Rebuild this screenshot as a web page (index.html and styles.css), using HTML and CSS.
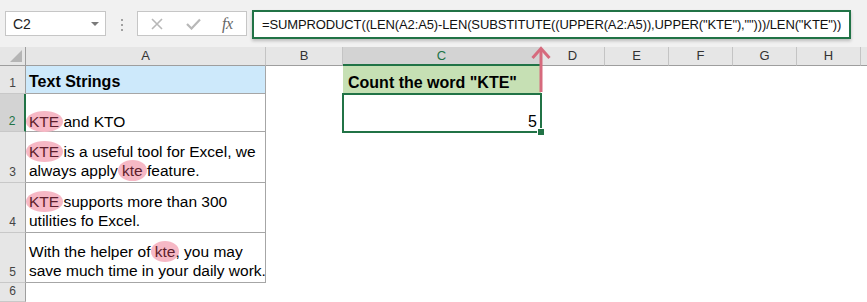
FILE: index.html
```html
<!DOCTYPE html>
<html>
<head>
<meta charset="utf-8">
<link rel="stylesheet" href="styles.css">
</head>
<body>
<div class="toolbar">
  <div class="namebox"><span>C2</span><span class="caret"></span></div>
  <div class="grip"><i></i><i></i><i></i></div>
  <div class="btns">
    <svg class="cross" width="12" height="12" viewBox="0 0 12 12"><path d="M1 1 L11 11 M11 1 L1 11" stroke="#b8b8b8" stroke-width="1.6" fill="none"/></svg>
    <svg class="check" width="15" height="12" viewBox="0 0 15 12"><path d="M1 6 L5.5 10.5 L14 1.5" stroke="#b8b8b8" stroke-width="2.2" fill="none"/></svg>
    <span class="fx">fx</span>
  </div>
  <div class="formula">=SUMPRODUCT((LEN(A2:A5)-LEN(SUBSTITUTE((UPPER(A2:A5)),UPPER("KTE"),"")))/LEN("KTE"))</div>
</div>
<div class="sheet">
  <div class="corner"><svg width="12" height="12" viewBox="0 0 12 12"><polygon points="12,0 12,12 0,12" fill="#b5b5b5"/></svg></div>
  <div class="ch">A</div>
  <div class="ch">B</div>
  <div class="ch sel">C</div>
  <div class="ch">D</div>
  <div class="ch">E</div>
  <div class="ch">F</div>
  <div class="ch">G</div>
  <div class="ch">H</div>
  <div class="ch last"></div>

  <div class="rh">1</div>
  <div class="a a1"><div>Text Strings</div></div>
  <div class="e"></div>
  <div class="c1"><div>Count the word "KTE"</div></div>
  <div class="e"></div><div class="e"></div><div class="e"></div><div class="e"></div><div class="e"></div><div class="e"></div>

  <div class="rh sel">2</div>
  <div class="a a2"><div><span class="hl first">KTE</span> and KTO</div></div>
  <div class="e"></div>
  <div class="c2"><div>5</div></div>
  <div class="e"></div><div class="e"></div><div class="e"></div><div class="e"></div><div class="e"></div><div class="e"></div>

  <div class="rh">3</div>
  <div class="a"><div><span class="hl first">KTE</span> is a useful tool for Excel, we<br>always apply <span class="hl">kte</span> feature.</div></div>
  <div class="e"></div><div class="e"></div>
  <div class="e"></div><div class="e"></div><div class="e"></div><div class="e"></div><div class="e"></div><div class="e"></div>

  <div class="rh">4</div>
  <div class="a"><div><span class="hl first">KTE</span> supports more than 300<br>utilities fo Excel.</div></div>
  <div class="e"></div><div class="e"></div>
  <div class="e"></div><div class="e"></div><div class="e"></div><div class="e"></div><div class="e"></div><div class="e"></div>

  <div class="rh">5</div>
  <div class="a"><div>With the helper of <span class="hl">kte</span>, you may<br>save much time in your daily work.</div></div>
  <div class="e"></div><div class="e"></div>
  <div class="e"></div><div class="e"></div><div class="e"></div><div class="e"></div><div class="e"></div><div class="e"></div>

  <div class="rh">6</div>
  <div class="e"></div><div class="e"></div><div class="e"></div>
  <div class="e"></div><div class="e"></div><div class="e"></div><div class="e"></div><div class="e"></div><div class="e"></div>

  <svg class="arrow" width="22" height="46" viewBox="0 0 22 46"><path d="M11 4 L11 46" stroke="#d66a7d" stroke-width="3" fill="none"/><path d="M2.5 12 L11 2.5 L19.5 12" stroke="#d66a7d" stroke-width="3" fill="none" stroke-linejoin="miter"/></svg>
</div>
</body>
</html>
```
FILE: styles.css
```css
html, body {
  margin: 0;
  padding: 0;
}
body {
  width: 867px;
  height: 302px;
  overflow: hidden;
  background: #ffffff;
  font-family: "Liberation Sans", Arial, sans-serif;
}
.toolbar {
  height: 47px;
  background: #f1f1f1;
  display: flex;
  align-items: flex-start;
  box-sizing: border-box;
}
.namebox {
  margin: 11px 0 0 5px;
  width: 101px;
  height: 25px;
  box-sizing: border-box;
  border: 1px solid #c6c6c6;
  background: #fff;
  display: flex;
  align-items: center;
  justify-content: space-between;
  padding: 0 6px 0 7px;
  font-size: 14px;
  color: #222;
}
.caret {
  width: 0;
  height: 0;
  border-left: 4px solid transparent;
  border-right: 4px solid transparent;
  border-top: 4px solid #7a7a7a;
}
.grip {
  width: 31px;
  margin-top: 19px;
  display: flex;
  flex-direction: column;
  align-items: center;
  gap: 3px;
}
.grip i {
  display: block;
  width: 2px;
  height: 2px;
  background: #a0a0a0;
}
.btns {
  margin-top: 11px;
  width: 110px;
  height: 25px;
  box-sizing: border-box;
  border: 1px solid #c6c6c6;
  background: #fff;
  display: flex;
  align-items: center;
}
.cross { margin-left: 13px; }
.check { margin-left: 23px; }
.fx {
  margin-left: 21px;
  font-family: "Liberation Serif", serif;
  font-style: italic;
  font-size: 16px;
  color: #666;
  letter-spacing: -0.5px;
}
.formula {
  margin: 10px 0 0 5px;
  width: 599px;
  height: 29px;
  box-sizing: border-box;
  border: 2px solid #217346;
  background: #fff;
  padding-left: 8px;
  font-size: 13px;
  letter-spacing: -0.12px;
  line-height: 25px;
  color: #111;
  white-space: nowrap;
  overflow: hidden;
  box-shadow: 0 2px 3px rgba(0, 0, 0, 0.22);
}
.sheet {
  position: relative;
  display: grid;
  grid-template-columns: 26px 240px 77px 198px 64px 64px 64px 64px 64px 6px;
  grid-template-rows: 19px 28px 38px 51px 50px 50px 19px;
  background: #fff;
}
.sheet > div {
  box-sizing: border-box;
  min-width: 0;
}
.corner {
  background: #e6e6e6;
  border-right: 1px solid #9e9e9e;
  border-bottom: 1px solid #9e9e9e;
  display: flex;
  justify-content: flex-end;
  align-items: flex-end;
  padding: 0 3px 3px 0;
}
.corner svg { display: block; }
.ch {
  background: #e6e6e6;
  border-right: 1px solid #c4c4c4;
  border-bottom: 1px solid #9e9e9e;
  text-align: center;
  font-size: 13px;
  line-height: 18px;
  color: #333;
}
.ch.sel {
  background: #d3d3d3;
  color: #217346;
  border-bottom: 2px solid #217346;
}
.ch.last { border-right: none; }
.rh {
  background: #e6e6e6;
  border-right: 1px solid #9e9e9e;
  border-bottom: 1px solid #c8c8c8;
  display: flex;
  align-items: flex-end;
  justify-content: center;
  font-size: 12px;
  line-height: 14px;
  padding-bottom: 3px;
  color: #444;
}
.rh.sel {
  background: #d3d3d3;
  color: #217346;
  border-right: 2px solid #217346;
}
.a {
  border-right: 1px solid #a6a6a6;
  border-bottom: 1px solid #a6a6a6;
  padding: 0 3px 2px 3px;
  display: flex;
  align-items: flex-end;
  font-size: 15.5px;
  line-height: 19px;
  color: #000;
  white-space: nowrap;
}
.a1 {
  background: #cde9fb;
  font-weight: bold;
  font-size: 16px;
}
.a2 { padding-bottom: 0; }
.c1 {
  background: #c6e0b4;
  font-weight: bold;
  font-size: 16px;
  line-height: 19px;
  padding: 0 0 2px 5px;
  display: flex;
  align-items: flex-end;
  white-space: nowrap;
}
.c2 {
  position: relative;
  outline: 2px solid #217346;
  outline-offset: -1px;
  display: flex;
  justify-content: flex-end;
  align-items: flex-end;
  padding: 0 4px 1px 0;
  font-size: 16px;
  line-height: 19px;
}
.c2::after {
  content: "";
  position: absolute;
  right: -3px;
  bottom: -3px;
  width: 6px;
  height: 6px;
  background: #217346;
  border: 1px solid #fff;
  box-sizing: content-box;
  margin: -1px;
}
.e { background: #fff; }
.hl {
  background: #f6b8c5;
  color: #5e1d2c;
  border-radius: 50%;
  padding: 2px 4px;
  margin: 0 -4px;
}
.hl.first {
  padding-left: 3px;
  margin-left: -3px;
}
.arrow {
  position: absolute;
  left: 530px;
  top: -1px;
}
```
